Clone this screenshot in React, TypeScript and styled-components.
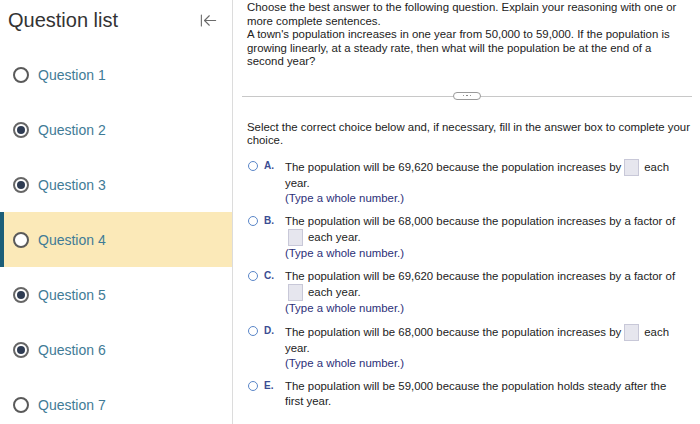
import React from "react";
import styled, { createGlobalStyle } from "styled-components";
import { ArrowLeftToLine } from "lucide-react";

const Global = createGlobalStyle`
  html, body { margin: 0; padding: 0; background: #fff; }
  body { font-family: "Liberation Sans", Arial, sans-serif; }
  * { box-sizing: border-box; }
`;

const Page = styled.div`
  display: flex;
  width: 700px;
  height: 424px;
  overflow: hidden;
`;

const Sidebar = styled.aside`
  width: 233px;
  flex: none;
  border-right: 1px solid #dcdcdc;
  display: flex;
  flex-direction: column;
`;

const SideHeader = styled.div`
  height: 47px;
  flex: none;
  display: flex;
  align-items: flex-start;
  justify-content: space-between;
  padding: 9px 14px 0 8px;
`;

const Title = styled.h1`
  margin: 0;
  font-size: 20px;
  font-weight: 400;
  color: #333;
  line-height: 22px;
`;

const CollapseBtn = styled.button`
  border: none;
  background: none;
  padding: 0;
  margin-top: 2px;
  color: #6b6b6b;
  display: flex;
`;

const QItem = styled.div<{ $active?: boolean }>`
  height: 55px;
  flex: none;
  display: flex;
  align-items: center;
  gap: 9px;
  background: ${(p) => (p.$active ? "#fbe9b8" : "transparent")};
  border-left: 4px solid ${(p) => (p.$active ? "#1c5e78" : "transparent")};
  padding-left: 9px;
`;

const QRadio = styled.span<{ $done?: boolean }>`
  width: 16px;
  height: 16px;
  border-radius: 50%;
  border: 2px solid ${(p) => (p.$done ? "#666" : "#5a5a5a")};
  display: flex;
  align-items: center;
  justify-content: center;
  background: #fff;
  &::after {
    content: "";
    width: 8px;
    height: 8px;
    border-radius: 50%;
    background: ${(p) => (p.$done ? "#2e3b52" : "transparent")};
  }
`;

const QLabel = styled.span`
  font-size: 14px;
  color: #3f7b96;
`;

const Main = styled.main`
  flex: 1;
  min-width: 0;
  padding: 0 10px 0 14px;
  color: #222;
  font-size: 11.4px;
  line-height: 13.5px;
`;

const Prompt = styled.p`
  margin: 0;
  padding-top: 1px;
`;

const Divider = styled.div`
  position: relative;
  height: 8px;
  margin: 23px -2px 0 -5px;
  display: flex;
  align-items: center;
  justify-content: center;
  &::before {
    content: "";
    position: absolute;
    left: 0;
    right: 0;
    top: 50%;
    border-top: 1px solid #c8c8c8;
  }
`;

const Pill = styled.span`
  position: relative;
  width: 28px;
  height: 8px;
  border: 1px solid #9a9a9a;
  border-radius: 5px;
  background: #fff;
  display: flex;
  align-items: center;
  justify-content: center;
  gap: 2px;
  & > i {
    width: 1.5px;
    height: 1.5px;
    background: #777;
    border-radius: 50%;
  }
`;

const Instruction = styled.p`
  margin: 21px 0 0;
`;

const Options = styled.div`
  margin-top: 11px;
  display: flex;
  flex-direction: column;
  gap: 8px;
`;

const Option = styled.div`
  display: flex;
  align-items: flex-start;
  line-height: 15px;
`;

const ORadio = styled.span`
  flex: none;
  width: 10px;
  height: 10px;
  border-radius: 50%;
  border: 1.3px solid #5a86c8;
  margin: 2px 6px 0 1px;
`;

const Letter = styled.span`
  flex: none;
  width: 21px;
  font-weight: 700;
  font-size: 10px;
  color: #3a4c92;
  line-height: 13px;
`;

const OText = styled.div`
  flex: 1;
  padding-right: 4px;
`;

const Hint = styled.div`
  color: #2c2f78;
`;

const Box = styled.span`
  display: inline-block;
  width: 15px;
  height: 17px;
  vertical-align: middle;
  background: #e6e6ee;
  border: 1px solid #c8c8d8;
  margin: 0 5px 0 3px;
`;

const questions = [
  { n: 1, done: false },
  { n: 2, done: true },
  { n: 3, done: true },
  { n: 4, done: false, active: true },
  { n: 5, done: true },
  { n: 6, done: true },
  { n: 7, done: false },
];

export default function App() {
  return (
    <Page>
      <Global />
      <Sidebar>
        <SideHeader>
          <Title>Question list</Title>
          <CollapseBtn aria-label="Collapse">
            <ArrowLeftToLine size={19} strokeWidth={1.4} />
          </CollapseBtn>
        </SideHeader>
        {questions.map((q) => (
          <QItem key={q.n} $active={q.active}>
            <QRadio $done={q.done} />
            <QLabel>Question {q.n}</QLabel>
          </QItem>
        ))}
      </Sidebar>
      <Main>
        <Prompt>
          Choose the best answer to the following question. Explain your reasoning with one or more
          complete sentences.
          <br />
          A town's population increases in one year from 50,000 to 59,000. If the population is
          growing linearly, at a steady rate, then what will the population be at the end of a
          second year?
        </Prompt>
        <Divider>
          <Pill>
            <i />
            <i />
            <i />
          </Pill>
        </Divider>
        <Instruction>
          Select the correct choice below and, if necessary, fill in the answer box to complete your
          choice.
        </Instruction>
        <Options>
          <Option>
            <ORadio />
            <Letter>A.</Letter>
            <OText>
              The population will be 69,620 because the population increases by
              <Box />
              each year.
              <Hint>(Type a whole number.)</Hint>
            </OText>
          </Option>
          <Option>
            <ORadio />
            <Letter>B.</Letter>
            <OText>
              The population will be 68,000 because the population increases by a factor of
              <Box />
              each year.
              <Hint>(Type a whole number.)</Hint>
            </OText>
          </Option>
          <Option>
            <ORadio />
            <Letter>C.</Letter>
            <OText>
              The population will be 69,620 because the population increases by a factor of
              <Box />
              each year.
              <Hint>(Type a whole number.)</Hint>
            </OText>
          </Option>
          <Option>
            <ORadio />
            <Letter>D.</Letter>
            <OText>
              The population will be 68,000 because the population increases by
              <Box />
              each year.
              <Hint>(Type a whole number.)</Hint>
            </OText>
          </Option>
          <Option>
            <ORadio />
            <Letter>E.</Letter>
            <OText>
              The population will be 59,000 because the population holds steady after the first
              year.
            </OText>
          </Option>
        </Options>
      </Main>
    </Page>
  );
}
